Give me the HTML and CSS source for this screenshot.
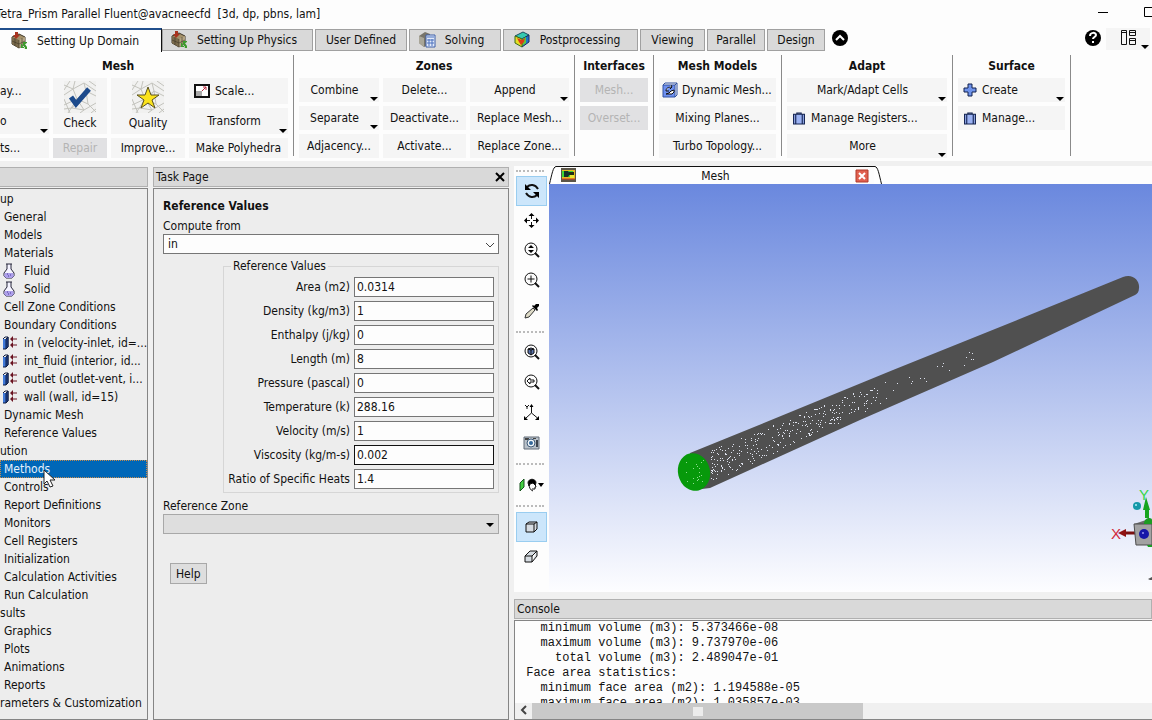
FILE: index.html
```
<!DOCTYPE html>
<html lang="en">

<head>
    <meta charset="UTF-8">
    <meta name="viewport" content="width=device-width, initial-scale=1.0">
    <title>Tetra_Prism Parallel Fluent</title>
    <link rel="stylesheet" href="styles.css">
</head>

<body>
    <!-- shared icons -->
    <svg class="defs" width="0" height="0">
        <symbol id="cube" viewBox="0 0 18 18">
            <path d="M2 5 9 2l6 3v7l-6 4-7-4z" fill="#a39069" stroke="#3d3527" />
            <path d="M2 5l7 3v8l-7-4z" fill="#7a6a4c" />
            <path d="M9 8l6-3v7l-6 4z" fill="#b5a482" />
            <path d="M2 9l7 3 6-3M5 6v8M12 6v8M9 8v8" fill="none" stroke="#3d3527" stroke-width=".6" />
            <path d="M5 0h3v3h2L6 7 3 3h2z" fill="#a8331f" />
            <path d="M11 12v4h4v-1h-2l-1-3zM13 10h4v1l-2 1 2 3v2h-2l-2-4z" fill="#3d9a2e" />
        </symbol>
        <symbol id="mesh" viewBox="0 0 32 32">
            <path d="M0 0h32v32H0z" fill="#f1f1f0" />
            <path d="M0 4l9 4L20 2l12 8M0 14l9-6 4 10 9-8 10 5M0 24l13-6 7 11 12-7M4 32l9-14M9 8l2-8M20 2l2 8 2 13 8 8M0 18l6 14M22 10L8 27l12 2-4 3M0 9L6 0M25 0l7 5M0 28l8-1M27 32l5-4M13 18l11 5" fill="none" stroke="#c3c3bd" />
        </symbol>
        <symbol id="case" viewBox="0 0 12 12">
            <path d="M4 2V1h4v1" fill="none" stroke="#10204e" />
            <path d="M1 2h10v9H1z" fill="#9bb2f3" stroke="#10204e" />
            <path d="M3 2v9M9 2v9" stroke="#10204e" />
        </symbol>
        <symbol id="flask" viewBox="0 0 14 16">
            <path d="M4 1h6M5 1v5L2 10v3l2 2h6l2-2v-3L9 6V1" fill="#f5f4ff" stroke="#26263a" />
            <path d="M3 10h8l1 3-2 2H4l-2-2z" fill="#aea0ea" />
            <path d="M5 11h1M8 12h1M6 13h1" stroke="#4a3a9a" />
        </symbol>
        <symbol id="bound" viewBox="0 0 16 14">
            <path d="M1 3h3v10H1z" fill="#3f78d8" />
            <path d="M1 3l2-2h3v10l-2 2H1" fill="none" stroke="#111d40" />
            <path d="M4 3l2-2v10l-2 2z" fill="#1d479b" stroke="#111d40" />
            <path d="M9 3h6M9 9h6" stroke="#6a1320" />
            <path d="M8 3l3-3v6zM8 9l3-3v6z" fill="#6a1320" />
        </symbol>
        <symbol id="lens" viewBox="0 0 20 20">
            <circle cx="9" cy="8" r="6" fill="#fbfbfb" stroke="#111" />
            <path d="M13 12l4 4" stroke="#111" stroke-width="2" />
        </symbol>
    </svg>

    <header class="titlebar">
        <h1>Tetra_Prism Parallel Fluent@avacneecfd&nbsp; [3d, dp, pbns, lam]</h1>
        <button aria-label="Minimize"><svg width="12" height="12"><path d="M1 6.500h10" stroke="#000" /></svg></button>
        <button aria-label="Maximize"><svg width="12" height="12"><path d="M1.500 1.500h9v9h-9z" fill="none" stroke="#000" /></svg></button>
    </header>

    <nav class="tabs">
        <button class="tab active"><svg width="18" height="18"><use href="#cube" /></svg>Setting Up Domain</button>
        <button class="tab with-icon physics"><svg width="18" height="18"><use href="#cube" /></svg>Setting Up Physics</button>
        <button class="tab user">User Defined</button>
        <button class="tab with-icon solving">
            <svg width="18" height="18" viewBox="0 0 18 18">
                <path d="M1 5l6-4 5 2v10l-6 3-5-4z" fill="#77746a" />
                <path d="M1 5l5 2v9l-5-4z" fill="#a9a698" />
                <path d="M8 4h9v12H8z" fill="#e3ebfa" stroke="#3c5fa8" />
                <path d="M9 6h7M9 9h7M9 12h7M11 8v7M14 8v7" stroke="#4b70bd" />
            </svg>Solving
        </button>
        <button class="tab with-icon post">
            <svg width="18" height="18" viewBox="0 0 18 18">
                <path d="M2 5l8-4 6 3-7 4z" fill="#35c9b0" stroke="#1b4d62" />
                <path d="M16 4v7l-7 5V8z" fill="#1c73c9" stroke="#1b2d62" />
                <path d="M9 8l4-2v6l-4 3z" fill="#5dc93a" />
                <path d="M2 5l7 3v8l-7-4z" fill="#e5de26" stroke="#3d6c16" />
                <path d="M4 7l5 2 3-2-1 4-3 3-2-3z" fill="#dc3b16" />
            </svg>Postprocessing
        </button>
        <button class="tab viewing">Viewing</button>
        <button class="tab parallel">Parallel</button>
        <button class="tab design">Design</button>
        <button class="round" aria-label="Collapse ribbon">
            <svg width="16" height="16"><circle cx="8" cy="8" r="8" /><path d="M4 10l4-4 4 4" fill="none" stroke="#fff" stroke-width="2" /></svg>
        </button>
        <button class="round help" aria-label="Help">
            <svg width="16" height="16"><circle cx="8" cy="8" r="8" /><path d="M5 6c0-4 6-4 6-1 0 2-3 2-3 4" fill="none" stroke="#fff" stroke-width="2" /><path d="M7 11h2v2H7z" fill="#fff" /></svg>
        </button>
        <button class="layout drop" aria-label="Window layout">
            <svg width="17" height="17" fill="none" stroke="#111"><path d="M1.500 1.500h5v14h-5zM9.500 1.500h6v5h-6zM9.500 9.500h6v6h-6zM1.500 3.500h5M9.500 3.500h6M9.500 11.500h6" /></svg>
        </button>
    </nav>

    <section class="ribbon">
        <div class="group mesh">
            <h2>Mesh</h2>
            <div class="cols">
                <div class="col tall"><button class="left">ay...</button><button class="left drop">o</button><button class="left">ts...</button></div>
                <div class="col tall">
                    <button class="big"><svg width="32" height="32"><use href="#mesh" /><path d="M7 16l5 7L25 8" fill="none" stroke="#1c4a8c" stroke-width="5" /></svg>Check</button>
                    <button disabled>Repair</button>
                </div>
                <div class="col tall">
                    <button class="big"><svg width="32" height="32"><use href="#mesh" /><path d="M16 6l3 8h8l-7 5 3 8-7-5-7 5 3-8-7-5h8z" fill="#fbe31c" stroke="#5a5220" /></svg>Quality</button>
                    <button>Improve...</button>
                </div>
                <div class="col tall">
                    <button class="left icon"><svg width="16" height="16"><path d="M1 2h14v12H1z" fill="#fff" stroke="#111" stroke-width="2" /><path d="M2 8h6v5H2z" fill="#aaa" /><path d="M8 8l4-4M9 4h3v3" fill="none" stroke="#b5283c" /></svg>Scale...</button>
                    <button class="drop">Transform</button>
                    <button>Make Polyhedra</button>
                </div>
            </div>
        </div>
        <div class="group zones">
            <h2>Zones</h2>
            <div class="cols">
                <div class="col"><button class="drop">Combine</button><button class="drop">Separate</button><button>Adjacency...</button></div>
                <div class="col"><button>Delete...</button><button>Deactivate...</button><button>Activate...</button></div>
                <div class="col"><button class="drop">Append</button><button>Replace Mesh...</button><button>Replace Zone...</button></div>
            </div>
        </div>
        <div class="group interfaces">
            <h2>Interfaces</h2>
            <div class="col"><button disabled>Mesh...</button><button disabled>Overset...</button></div>
        </div>
        <div class="group models">
            <h2>Mesh Models</h2>
            <div class="col">
                <button class="left icon tight"><svg width="16" height="16"><path d="M1 3h12v12H1z" fill="#6d8ff0" stroke="#31509f" /><path d="M13 3l2-2v12l-2 2M1 3l2-2h12" fill="none" stroke="#31509f" /><path d="M4 9c0-3 2-4 6-4L9 3M10 5L8 7M4 9h3M4 12h6l2-2V8L9 9l-2 2z" fill="#fff" stroke="#111" /></svg>Dynamic Mesh...</button>
                <button>Mixing Planes...</button>
                <button>Turbo Topology...</button>
            </div>
        </div>
        <div class="group adapt">
            <h2>Adapt</h2>
            <div class="col">
                <button class="drop">Mark/Adapt Cells</button>
                <button class="left icon"><svg width="14" height="13"><use href="#case" /></svg>Manage Registers...</button>
                <button class="drop">More</button>
            </div>
        </div>
        <div class="group surface">
            <h2>Surface</h2>
            <div class="col">
                <button class="left icon drop"><svg width="14" height="14"><path d="M5 1h4v4h4v4H9v4H5V9H1V5h4z" fill="#6f93ea" stroke="#10204e" /></svg>Create</button>
                <button class="left icon"><svg width="14" height="13"><use href="#case" /></svg>Manage...</button>
            </div>
        </div>
    </section>

    <main>
        <aside class="outline">
            <div class="bar"></div>
            <ul class="tree">
                <li class="root">up</li>
                <li>General</li>
                <li>Models</li>
                <li>Materials</li>
                <li class="leaf"><svg width="14" height="16"><use href="#flask" /></svg>Fluid</li>
                <li class="leaf"><svg width="14" height="16"><use href="#flask" /></svg>Solid</li>
                <li>Cell Zone Conditions</li>
                <li>Boundary Conditions</li>
                <li class="leaf"><svg width="16" height="14"><use href="#bound" /></svg>in (velocity-inlet, id=...</li>
                <li class="leaf"><svg width="16" height="14"><use href="#bound" /></svg>int_fluid (interior, id...</li>
                <li class="leaf"><svg width="16" height="14"><use href="#bound" /></svg>outlet (outlet-vent, i...</li>
                <li class="leaf"><svg width="16" height="14"><use href="#bound" /></svg>wall (wall, id=15)</li>
                <li>Dynamic Mesh</li>
                <li>Reference Values</li>
                <li class="root">ution</li>
                <li class="selected">Methods
                    <svg class="cursor" width="14" height="20" viewBox="0 0 14 20"><path d="M1 1v14l3-3 3 6 3-1-3-6h5z" fill="#fff" stroke="#222" /></svg>
                </li>
                <li>Controls</li>
                <li>Report Definitions</li>
                <li>Monitors</li>
                <li>Cell Registers</li>
                <li>Initialization</li>
                <li>Calculation Activities</li>
                <li>Run Calculation</li>
                <li class="root">sults</li>
                <li>Graphics</li>
                <li>Plots</li>
                <li>Animations</li>
                <li>Reports</li>
                <li class="root">rameters &amp; Customization</li>
            </ul>
        </aside>

        <section class="task">
            <div class="bar">Task Page
                <button aria-label="Close"><svg width="10" height="10"><path d="M1 1l8 8M9 1L1 9" stroke="#000" stroke-width="2" /></svg></button>
            </div>
            <form class="panel">
                <h3>Reference Values</h3>
                <label for="compute">Compute from</label>
                <div class="select"><select id="compute"><option>in</option></select><svg width="10" height="6"><path d="M1 1l4 4 4-4" fill="none" stroke="#444" /></svg></div>
                <fieldset>
                    <legend>Reference Values</legend>
                    <label for="area">Area (m2)</label><input id="area" value="0.0314">
                    <label for="density">Density (kg/m3)</label><input id="density" value="1">
                    <label for="enthalpy">Enthalpy (j/kg)</label><input id="enthalpy" value="0">
                    <label for="length">Length (m)</label><input id="length" value="8">
                    <label for="pressure">Pressure (pascal)</label><input id="pressure" value="0">
                    <label for="temp">Temperature (k)</label><input id="temp" value="288.16">
                    <label for="velocity">Velocity (m/s)</label><input id="velocity" value="1">
                    <label for="viscosity">Viscosity (kg/m-s)</label><input id="viscosity" class="current" value="0.002">
                    <label for="ratio">Ratio of Specific Heats</label><input id="ratio" value="1.4">
                </fieldset>
                <label for="zone">Reference Zone</label>
                <div class="select"><select id="zone" class="empty"><option></option></select><svg width="10" height="6"><path d="M1 1h8L5 5z" /></svg></div>
                <button type="button" class="help-button">Help</button>
            </form>
        </section>

        <section class="work">
            <div class="graphics">
                <div class="tools">
                    <hr>
                    <button class="on" aria-label="Rotate"><svg width="20" height="20"><path d="M5 6c3-3 8-3 11 2M15 14c-3 3-8 3-11-2" fill="none" stroke="#111" stroke-width="2" /><path d="M3 3v6h6zM17 17v-6h-6z" /></svg></button>
                    <button aria-label="Pan"><svg width="20" height="20"><path d="M9.500 4v4M9.500 11v4M4 9.500h4M11 9.500h4" stroke="#111" /><path d="M9.500 2l3 3h-6zM9.500 17l3-3h-6zM2 9.500l3-3v6zM17 9.500l-3-3v6z" /></svg></button>
                    <button aria-label="Zoom"><svg width="20" height="20"><use href="#lens" /><path d="M9 4l3 3H6zM9 12l3-3H6z" /></svg></button>
                    <button aria-label="Zoom in"><svg width="20" height="20"><use href="#lens" /><path d="M5.500 8h7M9 4.500v7" stroke="#111" /></svg></button>
                    <button aria-label="Probe"><svg width="20" height="20"><path d="M3 17l1-4 7-6 2 2-6 7z" fill="#dfdcc8" stroke="#333" /><path d="M10 5l5 5 1-1-1-2 2-2V3h-3l-2 2-1-1z" /></svg></button>
                    <hr>
                    <button aria-label="Fit"><svg width="20" height="20"><use href="#lens" /><path d="M6 6l3-1 3 1v4l-3 2-3-2z" fill="#5a74ae" stroke="#111" /><path d="M6 6l3 1 3-1M9 7v5" fill="none" stroke="#111" /></svg></button>
                    <button aria-label="Previous view"><svg width="20" height="20"><use href="#lens" /><path d="M5 8l3-3v2h4v2H8v2z" fill="#fff" stroke="#111" /></svg></button>
                    <button aria-label="Axes"><svg width="20" height="20"><path d="M9.500 3v7M9.500 10L4 15M9.500 10l6 5M3 2l2 2 2-2M5 4v2" fill="none" stroke="#111" /><path d="M9.500 1l2 3h-4zM2 17v-4l4 4zM17 17v-4l-4 4z" /></svg></button>
                    <button aria-label="Save picture"><svg width="20" height="20"><path d="M2 4h15v12H2z" fill="#b9c1c9" stroke="#636d78" /><path d="M3 5h4v2H3zM11 5h3v1h-3z" fill="#444" /><path d="M14 7h2v7h-2z" fill="#3c444e" /><circle cx="9" cy="10" r="4" fill="#f1f5f8" stroke="#3f5b78" /><circle cx="9" cy="10" r="2" fill="#34689b" /></svg></button>
                    <hr>
                    <button aria-label="Display"><svg width="26" height="20"><path d="M1 8l4-4v8l-4 4z" fill="#43cf42" stroke="#14501a" /><path d="M9 8c0-5 8-5 8 0l-1 2-2-2-3 1-1 2z" stroke="#111" /><path d="M10 9c0 3 1 6 4 7M16 9l1 3h-1v2h-3" fill="none" stroke="#111" /><path d="M19 8h6l-3 4z" /></svg></button>
                    <hr>
                    <button class="on" aria-label="Perspective"><svg width="20" height="20"><path d="M4 7h8v8H4zM4 7l3-2h8v7l-3 3M12 7l3-2" fill="#d6dce2" stroke="#111" /></svg></button>
                    <button aria-label="Orthographic"><svg width="20" height="20"><path d="M3 9h7v6H3zM3 9l5-5h7l-5 5M15 4v5l-5 6" fill="#d6dce2" stroke="#111" /></svg></button>
                </div>
                <div class="view">
                    <div class="view-tabs">
                        <svg class="edge" width="8" height="18"><path d="M8 0H6L1 18h7z" fill="#fff" /><path d="M8 .5H7C4 1 3 8 .5 18" fill="none" stroke="#111" /></svg>
                        <div class="view-tab">
                            <svg width="15" height="15"><path d="M0 0h15v14H0z" fill="#5b5548" /><path d="M1 2h13v9H1z" fill="#e7bc20" /><path d="M1 3h11v6H1z" fill="#3ed834" /><path d="M3 3h4l2 3-2 3H3z" fill="#15302a" /><path d="M8 4h5v3H8z" fill="#1f2c18" /><path d="M9 7h4v3H9z" fill="#e8e631" /><path d="M1 11h13" stroke="#d43c1f" /></svg>
                            <span>Mesh</span>
                            <button aria-label="Close tab"><svg width="14" height="14"><path d="M1 1h12v12H1z" fill="#e0604f" stroke="#b03a2d" /><path d="M4 4l6 6M10 4l-6 6" stroke="#fff" stroke-width="2" /></svg></button>
                        </div>
                        <svg class="edge" width="8" height="18"><path d="M0 0h2l5 18H0z" fill="#fff" /><path d="M0 .5h1C4 1 5 8 7.500 18" fill="none" stroke="#111" /></svg>
                    </div>
                    <div class="scene">
                        <svg class="model" viewBox="0 0 603 408" preserveAspectRatio="xMinYMin slice">
                            <path d="M141 269L227 234 344 186 478 132 574 93C584 89 591 97 590 104 590 108 588 110 586 111L444 178 311 236 161 304 145 306z" fill="#505050" />
                            <g id="specks" fill="#dfe3ef"></g>
                            <ellipse cx="145" cy="288" rx="16" ry="19" transform="rotate(-14 145 288)" fill="#07990b" />
                            <g id="face-specks" fill="#8fdc91"></g>
                        </svg>
                        <svg class="triad" width="42" height="96" viewBox="0 0 42 96">
                            <text x="1" y="55" fill="#d22a3c">X</text>
                            <text x="29" y="16" fill="#35d648">Y</text>
                            <path d="M25 49H14" stroke="#7a1010" stroke-width="3" />
                            <path d="M8 49l8-4v8z" fill="#8f1212" />
                            <path d="M35 34h4v-8h1L36 13l-3 13h2z" fill="#16a51e" />
                            <circle cx="27" cy="22" r="4" fill="#1498a8" /><circle cx="26" cy="21" r="1" fill="#b3f0f4" />
                            <path d="M24 40l12-4h6v4z" fill="#6c6c6c" />
                            <path d="M24 40h18v21H26z" fill="#a2a2a2" stroke="#4d4d4d" />
                            <path d="M34 40c0-7 8-7 8-4v4zM37 61h5v2h-4z" fill="#1c9c22" />
                            <circle cx="34" cy="50" r="5" fill="#1616a8" /><circle cx="33" cy="49" r="1" fill="#9797ef" />
                            <path d="M42 93l-4 2 4 2z" fill="#555" />
                        </svg>
                    </div>
                </div>
            </div>

            <div class="bar">Console</div>
            <div class="console">
                <pre>   minimum volume (m3): 5.373466e-08
   maximum volume (m3): 9.737970e-06
     total volume (m3): 2.489047e-01
 Face area statistics:
   minimum face area (m2): 1.194588e-05
   maximum face area (m2): 1.035857e-03</pre>
                <div class="scroll">
                    <button aria-label="Scroll left"><svg width="8" height="10"><path d="M6 1L2 5l4 4" fill="none" stroke="#444" stroke-width="2" /></svg></button>
                    <div class="thumb"><i></i></div>
                </div>
            </div>
        </section>
    </main>
    <script src="mesh.js"></script>
</body>

</html>
```
FILE: styles.css
```
* {
    box-sizing: border-box;
}

body {
    display: flex;
    flex-direction: column;
    height: 100vh;
    margin: 0;
    overflow: hidden;
    background-color: #f0f0f0;
    color: #111;
    font: 12px/16px "DejaVu Sans Condensed", "Noto Sans", sans-serif;
}

button, input, select {
    margin: 0;
    padding: 0;
    border: 0;
    background: none;
    color: inherit;
    font: inherit;
}

h1, h2, h3, ul, pre {
    margin: 0;
    padding: 0;
}

svg {
    flex: none;
}

.defs {
    position: absolute;
}

/* title bar */
.titlebar {
    display: flex;
    flex: none;
    align-items: center;
    height: 28px;
    margin-right: -20px;
    background-color: #fdfdfd;
}

.titlebar h1 {
    flex: 1;
    margin-left: -4px;
    font-size: 12px;
    font-weight: normal;
}

.titlebar button {
    width: 46px;
    height: 24px;
}

/* ribbon tabs */
.tabs {
    display: flex;
    flex: none;
    gap: 2px;
    height: 24px;
    background-color: #fdfdfd;
}

.tab {
    display: flex;
    align-items: center;
    justify-content: center;
    gap: 9px;
    height: 22px;
    margin-top: 1px;
    border: 1px solid #a0a0a0;
    background-color: #d9d9d9;
    white-space: nowrap;
}

.tab.with-icon {
    padding-right: 8px;
}

.tab.active {
    width: 162px;
    height: 24px;
    margin: 0 -2px 0 0;
    padding-left: 10px;
    justify-content: flex-start;
    border: 0;
    border-top: 2px solid #1f4e8c;
    border-right: 1px solid #111;
    background-color: #fdfdfd;
}

.physics { width: 151px; }
.user { width: 92px; }
.solving { width: 92px; }
.post { width: 135px; }
.viewing { width: 65px; }
.parallel { width: 58px; }
.design { width: 58px; }

.round {
    width: 16px;
    height: 16px;
    margin: 2px 0 0 5px;
}

.round.help {
    margin-left: auto;
}

.layout {
    width: 44px;
    margin: 0 2px 2px 3px;
    background-color: #f5f5f5;
}

/* ribbon */
.ribbon {
    display: flex;
    flex: none;
    height: 109px;
    padding: 3px 0 5px;
    background-color: #fdfdfd;
}

.group {
    padding: 3px 5px 0;
    border-right: 1px solid #8a8a8a;
}

.group h2 {
    height: 20px;
    font-size: 12px;
    text-align: center;
}

.mesh { width: 294px; padding-left: 0; }
.mesh h2 { padding-right: 52px; }
.zones { width: 281px; }
.interfaces { width: 79px; }
.models { width: 128px; }
.adapt { width: 171px; }
.surface { width: 118px; }

.cols {
    display: grid;
    gap: 4px;
}

.mesh .cols {
    grid-template-columns: 49px 54px 74px 1fr;
}

.zones .cols {
    grid-template-columns: 80px 83px 1fr;
}

.col {
    display: grid;
    grid-template-rows: repeat(3, 24px);
    gap: 4px;
    align-content: start;
}

.col.tall {
    grid-template-rows: 26px 26px 20px;
}

.ribbon button {
    display: flex;
    align-items: center;
    justify-content: center;
    background-color: #f5f5f5;
    white-space: nowrap;
}

.ribbon .drop {
    padding-right: 9px;
}

.ribbon .left {
    justify-content: flex-start;
}

.ribbon .icon {
    gap: 5px;
    padding-left: 5px;
}

.ribbon .tight {
    gap: 4px;
    padding-left: 3px;
}

.ribbon .big {
    flex-direction: column;
    grid-row: span 2;
    gap: 2px;
}

.ribbon button:disabled {
    background-color: #e1e1e3;
    color: #b4b4b4;
}

.drop {
    position: relative;
}

/* menu arrow in the button's corner */
.drop::after {
    content: '';
    position: absolute;
    right: 1px;
    bottom: 1px;
    border: 4px solid transparent;
    border-top-color: #000;
    border-bottom: 0;
}

/* panels */
main {
    display: grid;
    flex: 1;
    grid-template-columns: 148px 356px 1fr;
    gap: 5px;
    min-height: 0;
    padding-top: 5px;
}

.outline, .task, .work {
    display: flex;
    flex-direction: column;
    min-width: 0;
    min-height: 0;
}

.bar {
    display: flex;
    flex: none;
    align-items: center;
    justify-content: space-between;
    height: 20px;
    margin: 1px 0;
    padding: 0 3px 0 2px;
    border: 1px solid #b0b0b0;
    background-color: #d9d9d9;
}

.bar button {
    display: flex;
}

.outline .bar {
    border-left: 0;
}

.tree, .panel {
    flex: 1;
    min-height: 0;
    border: 1px solid #858585;
    background-color: #ededed;
}

.tree {
    padding-top: 1px;
    border-left: 0;
    list-style: none;
    overflow: hidden;
}

.tree li {
    height: 18px;
    padding-left: 4px;
    line-height: 18px;
    white-space: nowrap;
}

.tree .root {
    padding-left: 0;
}

.tree .leaf {
    display: flex;
    align-items: center;
    padding-left: 2px;
}

.leaf svg {
    margin-right: 6px;
}

.leaf svg[width="14"] {
    margin-right: 8px;
}

.tree .selected {
    position: relative;
    background-color: #0067b8;
    color: #e6f1fb;
    outline: 1px dotted #c58a4c;
    outline-offset: -1px;
}

.cursor {
    position: absolute;
    left: 43px;
    top: 9px;
}

/* task page */
.panel {
    padding: 9px;
}

.panel h3 {
    height: 20px;
    font-size: 12px;
}

.panel > label {
    display: block;
}

.select {
    position: relative;
}

.select select {
    display: block;
    width: 100%;
    height: 20px;
    padding-left: 4px;
    border: 1px solid #767676;
    background-color: #fdfdfd;
    appearance: none;
}

.select .empty {
    border-color: #a8a8a8;
    background-color: #dedede;
}

.select svg {
    position: absolute;
    right: 4px;
    top: 8px;
}

fieldset {
    display: grid;
    grid-template-columns: 1fr 140px;
    gap: 4px;
    margin: 4px 0 5px 60px;
    padding: 3px 4px;
    border: 1px solid #d6d6d6;
}

legend {
    margin-left: 3px;
    padding: 0 2px;
}

fieldset label {
    line-height: 20px;
    text-align: right;
    white-space: nowrap;
}

fieldset input {
    width: 140px;
    height: 20px;
    padding-left: 2px;
    border: 1px solid #767676;
    background-color: #fdfdfd;
}

fieldset .current {
    border-color: #111;
}

.help-button {
    height: 21px;
    margin: 29px 0 0 7px;
    padding: 0 5px;
    border: 1px solid #a8a8a8;
    background-color: #dedede;
}

/* graphics window */
.graphics {
    display: flex;
    flex: 1;
    min-height: 0;
    margin-bottom: 6px;
    background-color: #fdfdfd;
}

.tools {
    display: flex;
    flex-direction: column;
    width: 35px;
    padding: 0 2px;
}

.tools hr {
    width: 28px;
    height: 2px;
    margin: 5px 0;
    border: 0;
    border-top: 2px dotted #bbb;
}

.tools hr:first-child {
    margin: 4px 0;
}

.tools button {
    display: flex;
    align-items: center;
    justify-content: center;
    width: 31px;
    height: 30px;
}

.tools .on {
    border: 1px solid #99cdf0;
    background-color: #cce6fb;
}

.view {
    display: flex;
    flex: 1;
    flex-direction: column;
    min-width: 0;
}

.view-tabs {
    display: flex;
    height: 18px;
}

.view-tab {
    display: flex;
    align-items: center;
    justify-content: space-between;
    width: 317px;
    padding: 0 4px;
    border-top: 1px solid #111;
}

.view-tab button {
    display: flex;
    margin-right: 1px;
}

.scene {
    position: relative;
    flex: 1;
    overflow: hidden;
    background: linear-gradient(#6a88de, #fdfdff);
}

.model {
    display: block;
    width: 100%;
    height: 100%;
}

.triad {
    position: absolute;
    right: 0;
    bottom: 12px;
    font: 15px "Liberation Sans", sans-serif;
}

/* console */
.console {
    display: flex;
    flex: none;
    flex-direction: column;
    height: 100px;
    border: 1px solid #858585;
    border-right: 0;
    background-color: #fdfdfd;
}

.console pre {
    height: 82px;
    padding-left: 4px;
    overflow: hidden;
    font: 12px/15px "Liberation Mono", monospace;
}

.scroll {
    display: flex;
    height: 16px;
    background-color: #f0f0f0;
}

.scroll button {
    width: 17px;
    height: 16px;
}

.thumb {
    display: flex;
    align-items: center;
    justify-content: center;
    width: 52%;
    background-color: #c9c9c9;
}

.thumb i {
    width: 10px;
    height: 9px;
    background-color: #ececec;
}
```
FILE: mesh.js
```
// Gaps of the surface mesh that show through as light specks
const Specks = {
    seed: 7,

    random: function () {
        this.seed = (this.seed * 16807) % 2147483647;
        return this.seed / 2147483647;
    },

    add: function (id, x, y) {
        const dot = document.createElementNS('http://www.w3.org/2000/svg', 'rect');
        dot.setAttribute('x', Math.round(x));
        dot.setAttribute('y', Math.round(y));
        dot.setAttribute('width', 1);
        dot.setAttribute('height', 1);
        document.getElementById(id).appendChild(dot);
    },

    draw: function () {
        // along the pipe, thinning out towards the far end
        for (let i = 0; i < 310; i++) {
            const t = Math.pow(this.random(), 1.3) * (0.5 + this.random() * 0.2);
            const spread = (this.random() - 0.5) * 32 * (1 - t * 0.5);
            this.add('specks', 162 + t * 270, 282 - t * 116 + spread);
        }
        for (let i = 0; i < 18; i++) {
            const t = 0.65 + this.random() * 0.35;
            this.add('specks', 162 + t * 270, 279 - t * 110 + (this.random() - 0.5) * 12);
        }
        for (let i = 0; i < 18; i++) {
            this.add('face-specks', 135 + this.random() * 20, 275 + this.random() * 26);
        }
    },
};

Specks.draw();
```
